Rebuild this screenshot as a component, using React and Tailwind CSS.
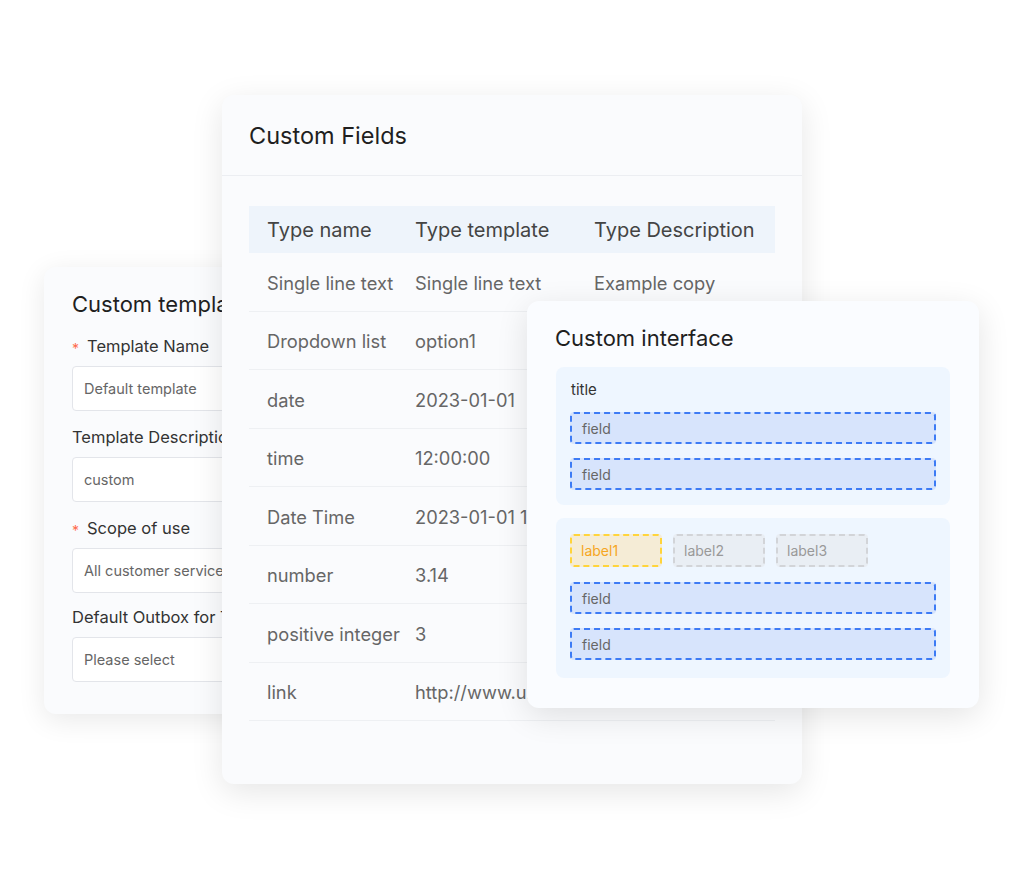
import React from 'react';

const font = { fontFamily: 'Inter, "Noto Sans", sans-serif' };

// only the first description cell peeks out from under the interface card
const rows = [
  ['Single line text', 'Single line text', 'Example copy'],
  ['Dropdown list', 'option1', ''],
  ['date', '2023-01-01', ''],
  ['time', '12:00:00', ''],
  ['Date Time', '2023-01-01 12:00:00', ''],
  ['number', '3.14', ''],
  ['positive integer', '3', ''],
  ['link', 'http://www.url.com', ''],
];

const FormField = ({ label, required, value }) => (
  <div>
    <div className="flex items-center h-6 text-[16.5px] text-[#333]">
      {required && <span className="text-[#ff6a4d] text-[14px] mr-2 mt-1">*</span>}
      <span className="whitespace-nowrap">{label}</span>
    </div>
    <div className="mt-2 h-[45px] w-[260px] border border-[#e3e5ea] rounded bg-white flex items-center px-[11px] text-[14.5px] text-[#666] whitespace-nowrap">
      {value}
    </div>
  </div>
);

const TemplateCard = () => (
  <div className="absolute left-[44px] top-[267px] w-[320px] h-[447px] rounded-xl bg-[#fafbfd] shadow-[0_6px_28px_rgba(0,0,0,0.09)] pl-[28px] pt-[22px]">
    <div className="text-[22px] leading-[30px] text-[#1f1f1f] whitespace-nowrap">Custom template</div>
    <div className="mt-[15px]">
      <FormField label="Template Name" required value="Default template" />
    </div>
    <div className="mt-[14px]">
      <FormField label="Template Description" value="custom" />
    </div>
    <div className="mt-[14px]">
      <FormField label="Scope of use" required value="All customer service" />
    </div>
    <div className="mt-3">
      <FormField label="Default Outbox for Template" value="Please select" />
    </div>
  </div>
);

const FieldsCard = () => (
  <div className="absolute left-[222px] top-[95px] w-[580px] h-[689px] rounded-xl bg-[#fafbfd] shadow-[0_8px_32px_rgba(0,0,0,0.1)]">
    <div className="h-[81px] border-b border-[#eceef2] flex items-center px-[27px] pt-[2px]">
      <span className="text-[23.5px] text-[#1f1f1f]">Custom Fields</span>
    </div>
    <div className="mx-[27px] mt-[30px]">
      <div className="grid grid-cols-[148px_179px_1fr] h-[47px] items-center bg-[#eef4fb] text-[20px] text-[#444] pl-[18px]">
        <span>Type name</span>
        <span>Type template</span>
        <span>Type Description</span>
      </div>
      {rows.map((r) => (
        <div
          key={r[0]}
          className="grid grid-cols-[148px_179px_1fr] h-[58.5px] items-center border-b border-[#eef0f3] text-[18.3px] text-[#666] pl-[18px] pt-[3px] whitespace-nowrap"
        >
          <span>{r[0]}</span>
          <span>{r[1]}</span>
          <span>{r[2]}</span>
        </div>
      ))}
    </div>
  </div>
);

const DashedField = ({ className }) => (
  <div className={`h-8 rounded border-2 border-dashed border-[#3d7bf5] bg-[#d7e4fc] flex items-center px-[10px] text-[14px] text-[#666] ${className}`}>
    field
  </div>
);

const InterfaceCard = () => (
  <div className="absolute left-[527px] top-[301px] w-[452px] h-[407px] rounded-xl bg-[#fafcff] shadow-[0_8px_32px_rgba(0,0,0,0.11)] px-[29px] pt-[22px]">
    <div className="text-[22px] leading-[30px] text-[#1f1f1f] -ml-px">Custom interface</div>
    <div className="mt-[14px] rounded-lg bg-[#eef6ff] px-[14px] pt-[12px] pb-[15px]">
      <div className="text-[15px] leading-[22px] text-[#333] ml-px">title</div>
      <DashedField className="mt-[11px]" />
      <DashedField className="mt-[14px]" />
    </div>
    <div className="mt-[13px] rounded-lg bg-[#eef6ff] px-[14px] pt-[16px] pb-[18px]">
      <div className="flex gap-[11px]">
        <div className="w-[92px] h-[33px] rounded border-2 border-dashed border-[#ffd43b] bg-[#f5ecd6] flex items-center px-[9px] text-[14px] text-[#f5a623]">
          label1
        </div>
        <div className="w-[92px] h-[33px] rounded border-2 border-dashed border-[#d2d4d8] bg-[#e9eef4] flex items-center px-[9px] text-[14px] text-[#999]">
          label2
        </div>
        <div className="w-[92px] h-[33px] rounded border-2 border-dashed border-[#d2d4d8] bg-[#e9eef4] flex items-center px-[9px] text-[14px] text-[#999]">
          label3
        </div>
      </div>
      <DashedField className="mt-[15px]" />
      <DashedField className="mt-[14px]" />
    </div>
  </div>
);

export default function App() {
  return (
    <div className="relative w-[1024px] h-[878px] bg-white overflow-hidden" style={font}>
      <TemplateCard />
      <FieldsCard />
      <InterfaceCard />
    </div>
  );
}
